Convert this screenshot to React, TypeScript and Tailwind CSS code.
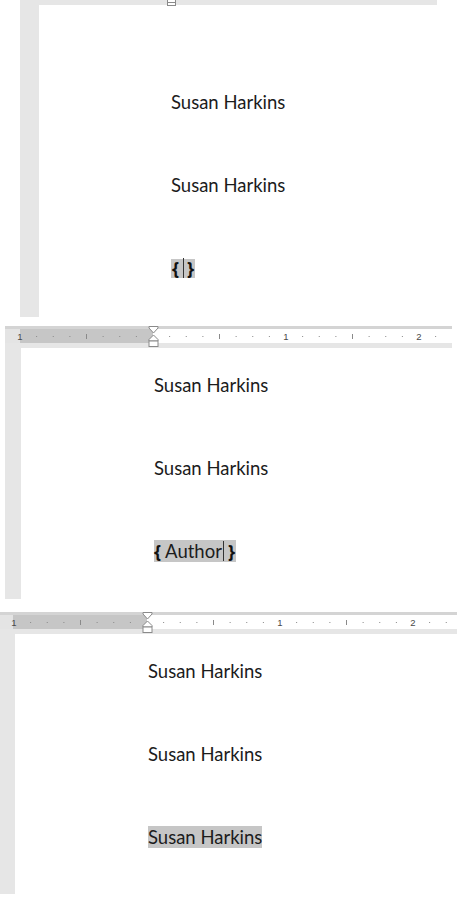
import React from "react";

const FONT = { fontFamily: '"Lato", "Open Sans", sans-serif' };

function RulerTicks({ width, indent }: { width: number; indent: number }) {
  const step = 133 / 8;
  const items: React.ReactNode[] = [];
  for (let k = -16; k <= 40; k++) {
    if (k === 0) continue;
    const x = indent + k * step;
    if (x < 8 || x > width - 4) continue;
    if (k % 8 === 0) {
      items.push(
        <text key={k} x={x} y={10.5} textAnchor="middle" fontSize={9.5} fill="#4a4a4a" fontFamily="Liberation Sans, sans-serif">
          {Math.abs(k / 8)}
        </text>
      );
    } else if (k % 4 === 0) {
      items.push(<rect key={k} x={x - 0.5} y={5} width={1} height={5} fill="#8a8a8a" />);
    } else {
      items.push(<rect key={k} x={x - 0.5} y={7} width={1} height={1} fill="#8a8a8a" />);
    }
  }
  return (
    <svg width={width} height={14} className="absolute left-0 top-0">
      {items}
    </svg>
  );
}

function IndentMarker() {
  return (
    <svg width={11} height={22} viewBox="0 0 11 22" className="absolute top-[0px]" style={{ left: -5.5 }}>
      <path d="M1 0.5 H10 V2 L5.5 7 L1 2 Z" fill="#fff" stroke="#8a8a8a" strokeWidth={1} />
      <path d="M5.5 9 L10 13.5 V15 H1 V13.5 Z" fill="#fff" stroke="#8a8a8a" strokeWidth={1} />
      <rect x={1} y={15} width={9} height={5.5} fill="#fff" stroke="#8a8a8a" strokeWidth={1} />
    </svg>
  );
}

function Ruler({ width, cap, indent }: { width: number; cap: number; indent: number }) {
  return (
    <div className="flex flex-col" style={{ width }}>
      <div className="h-[3px] bg-[#d4d4d4]" />
      <div className="relative h-[14px] flex">
        <div className="bg-[#e4e4e4]" style={{ width: cap }} />
        <div className="bg-[#c6c6c6]" style={{ width: indent - cap }} />
        <div className="flex-1 bg-white" />
        <RulerTicks width={width} indent={indent} />
        <div className="absolute -top-[3px]" style={{ left: indent }}>
          <IndentMarker />
        </div>
      </div>
      <div className="h-[5px] bg-[#e6e6e6]" />
    </div>
  );
}

function Cursor() {
  return <span className="inline-block w-px h-[20px] bg-[#333] align-middle" />;
}

function Brace({ children }: { children: React.ReactNode }) {
  return (
    <span className="font-bold text-[18px] leading-none text-[#111]" style={{ fontFamily: '"Noto Sans", "DejaVu Sans", sans-serif' }}>
      {children}
    </span>
  );
}

function Line({ children }: { children: React.ReactNode }) {
  return <div className="h-[22px] leading-[22px] text-[18.5px] text-[#1c1c1c] whitespace-nowrap">{children}</div>;
}

export default function App() {
  return (
    <div className="w-[457px] h-[900px] bg-white overflow-hidden" style={FONT}>
      {/* Panel 1 */}
      <div className="h-[318px] flex pl-[20px]">
        <div className="w-[19px] h-[317px] bg-[#e6e6e6]" />
        <div className="flex flex-col">
          <div className="relative w-[398px] h-[5px] bg-[#e6e6e6]">
            <svg width={10} height={7} className="absolute left-[128px] -top-[1px]">
              <rect x={0.5} y={0.5} width={8} height={6} fill="#fff" stroke="#8a8a8a" />
              <line x1={0.5} x2={8.5} y1={3.5} y2={3.5} stroke="#8a8a8a" />
            </svg>
          </div>
          <div className="flex flex-col gap-[61px] pt-[86px] pl-[132px]">
            <Line>Susan Harkins</Line>
            <Line>Susan Harkins</Line>
            <Line>
              <span className="inline-flex items-center h-[19px] bg-[#c6c6c6] px-[1px]">
                <Brace>{"{"}</Brace>
                <span className="w-[4px]" />
                <Cursor />
                <span className="w-[3px]" />
                <Brace>{"}"}</Brace>
              </span>
            </Line>
          </div>
        </div>
      </div>

      {/* Panel 2 */}
      <div className="h-[294px] flex flex-col pt-[8px] pl-[5px]">
        <Ruler width={447} cap={15} indent={148} />
        <div className="flex">
          <div className="w-[16px] h-[251px] bg-[#e6e6e6]" />
          <div className="flex flex-col gap-[61px] pt-[26px] pl-[133px]">
            <Line>Susan Harkins</Line>
            <Line>Susan Harkins</Line>
            <Line>
              <span className="inline-flex items-center h-[22px] bg-[#c6c6c6]">
                <Brace>{"{"}</Brace>
                <span className="w-[4px]" />
                <span>Author</span>
                <span className="w-[1px]" />
                <Cursor />
                <span className="w-[4px]" />
                <Brace>{"}"}</Brace>
                <span className="w-[1px]" />
              </span>
            </Line>
          </div>
        </div>
      </div>

      {/* Panel 3 */}
      <div className="flex flex-col">
        <Ruler width={457} cap={13} indent={147} />
        <div className="flex">
          <div className="w-[15px] h-[260px] bg-[#e6e6e6]" />
          <div className="flex flex-col gap-[61px] pt-[26px] pl-[133px]">
            <Line>Susan Harkins</Line>
            <Line>Susan Harkins</Line>
            <Line>
              <span className="inline-block h-[22px] bg-[#c6c6c6]">Susan Harkins</span>
            </Line>
          </div>
        </div>
      </div>
    </div>
  );
}
